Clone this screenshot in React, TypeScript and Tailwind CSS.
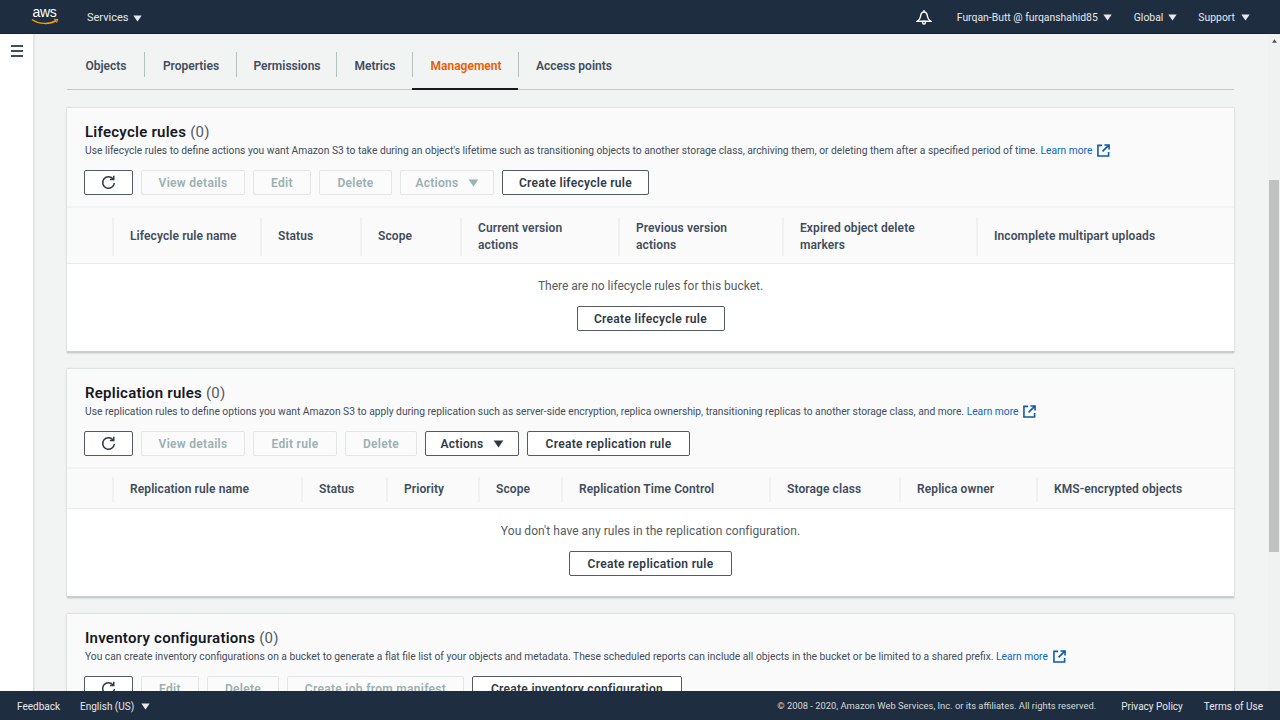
import React from "react";

const Caret = ({ className = "" }: { className?: string }) => (
  <svg viewBox="0 0 12 9" className={className} fill="currentColor">
    <path d="M0.5 0.5h11L6 8.5z" />
  </svg>
);

const Refresh = () => (
  <svg viewBox="0 0 16 16" className="w-[15px] h-[15px]" fill="none" stroke="currentColor" strokeWidth="1.6">
    <path d="M13.2 4.6A6.2 6.2 0 1 0 14.2 8.5" />
    <path d="M13.6 0.8V4.9H9.5" />
  </svg>
);

const External = () => (
  <svg viewBox="0 0 14 14" className="w-[13px] h-[13px] ml-[5px] inline-block align-[-3px] text-[#0a5cad]" fill="none" stroke="currentColor" strokeWidth="1.7">
    <path d="M5.5 1.5H1v11.5h11.5V8.5" />
    <path d="M8 1h5v5M13 1 6 8" />
  </svg>
);

const Btn = ({ w, children, disabled, caret }: { w: string; children?: React.ReactNode; disabled?: boolean; caret?: boolean }) => (
  <div
    className={`${w} h-[25px] shrink-0 flex items-center justify-center gap-[9px] rounded-[2px] border text-[12px] tracking-[0.3px] font-semibold ${
      disabled ? "border-[#e3e6e6] text-[#9ab0b1] bg-[#fbfbfb]" : "border-[#545b64] text-[#2f3a45] bg-white"
    }`}
  >
    {children}
    {caret && <Caret className="w-[11px] h-[8px]" />}
  </div>
);

const HeadCell = ({ w, children }: { w: string; children: React.ReactNode }) => (
  <div className={`${w} shrink-0 flex items-center`}>
    <div className="w-[2px] self-stretch my-[1px] bg-[#f0f1f1]" />
    <div className="pl-4 text-[12px] leading-[17px] tracking-[0.1px] font-semibold text-[#414d5c]">{children}</div>
  </div>
);

const Card = ({ children, className = "" }: { children: React.ReactNode; className?: string }) => (
  <section className={`bg-white border-b-[2px] border-[#c9cdcd] shadow-[0_0_2px_rgba(0,28,36,0.25)] ${className}`}>{children}</section>
);

const CardHead = ({ title, desc, buttons }: { title: string; desc: string; buttons: React.ReactNode }) => (
  <div className="bg-[#fafafa] pl-[18px] pr-4 border-b-[2px] border-[#f2f3f3]">
    <h2 className="pt-[14px] text-[15px] leading-[20px] tracking-[0.25px] font-semibold text-[#16191f]">
      {title} <span className="font-normal text-[#545b64]">(0)</span>
    </h2>
    <p className="mt-[1px] text-[10.25px] leading-[15px] text-[#414d5c] whitespace-nowrap">
      {desc} <span className="text-[#0a66c2]">Learn more</span>
      <External />
    </p>
    <div className="flex gap-2 pt-[12px] pb-[11px] -ml-px">{buttons}</div>
  </div>
);

const tabs = [
  { t: "Objects", w: "w-[78px]" },
  { t: "Properties", w: "w-[92px]" },
  { t: "Permissions", w: "w-[100px]" },
  { t: "Metrics", w: "w-[76px]" },
  { t: "Management", w: "w-[106px]", active: true },
  { t: "Access points", w: "w-[110px]" },
];

export default function App() {
  return (
    <div className="h-screen flex flex-col overflow-hidden font-['Roboto','Noto_Sans',sans-serif] bg-white">
      <header className="h-[34px] shrink-0 bg-[#1f2d40] border-b border-[#18222f] flex items-center pt-[3px] text-[#e6e9ec] text-[11px]">
        <div className="ml-[30px] -mt-[5px] w-[29px] flex flex-col items-center leading-none">
          <span className="text-[14px] leading-[11px] tracking-[-0.3px] text-white font-['Liberation_Sans',sans-serif]">aws</span>
          <svg viewBox="0 0 28 7" className="w-[28px] h-[7px]" fill="none">
            <path d="M1 1.5C8 6.5 19 6.5 25.5 2.5" stroke="#f90" strokeWidth="1.5" />
            <path d="M23 1.2l3.6.2-1 3.2" stroke="#f90" strokeWidth="1.1" />
          </svg>
        </div>
        <span className="ml-[28px]">Services</span>
        <Caret className="ml-[5px] w-[9px] h-[7px]" />
        <div className="ml-auto flex items-center text-[10.4px]">
          <svg viewBox="0 0 16 16" className="w-[16px] h-[16px] -mt-[2px] mr-[25px]" fill="none" stroke="white" strokeWidth="1.4">
            <path d="M8 1V3M8 3C5.6 3 4.8 5 4.6 7.2 4.4 9.4 3.4 10.6 1.2 12.2h13.6c-2.2-1.6-3.2-2.8-3.4-5C11.2 5 10.4 3 8 3Z" />
            <circle cx="8" cy="13.6" r="1.5" />
          </svg>
          <span>Furqan-Butt @ furqanshahid85</span>
          <Caret className="ml-[5px] w-[9px] h-[7px]" />
          <span className="ml-[22px]">Global</span>
          <Caret className="ml-[5px] w-[9px] h-[7px]" />
          <span className="ml-[21px]">Support</span>
          <Caret className="ml-[6px] mr-[30px] w-[9px] h-[7px]" />
        </div>
      </header>

      <div className="flex-1 flex min-h-0">
        <aside className="w-[35px] shrink-0 bg-white border-r-[2px] border-[#e3e5e5] pt-[11px] pl-[11px]">
          <div className="w-[12px] flex flex-col gap-[3px]">
            <div className="h-[2px] bg-[#414d5c]" />
            <div className="h-[2px] bg-[#414d5c]" />
            <div className="h-[2px] bg-[#414d5c]" />
          </div>
        </aside>

        <main className="flex-1 min-w-0 bg-[#f2f3f3] overflow-hidden pl-8 pr-[34px]">
          <nav className="mt-[16px] h-[39px] flex border-b-[1px] border-[#c3c8c8] box-content">
            {tabs.map((tab, i) => (
              <div key={tab.t} className={`${tab.w} shrink-0 relative flex items-center justify-center pb-[7px] text-[12px] font-semibold ${tab.active ? "text-[#ec5b00]" : "text-[#414d5c]"}`}>
                {tab.t}
                {i < 5 && <span className="absolute right-0 top-[2px] h-[25px] w-px bg-[#b6bfbf]" />}
                {tab.active && <span className="absolute -left-px right-px -bottom-[1px] h-[2px] bg-[#16191f]" />}
              </div>
            ))}
          </nav>

          <div className="mt-[18px] flex flex-col gap-4">
            <Card>
              <CardHead
                title="Lifecycle rules"
                desc="Use lifecycle rules to define actions you want Amazon S3 to take during an object's lifetime such as transitioning objects to another storage class, archiving them, or deleting them after a specified period of time."
                buttons={
                  <>
                    <Btn w="w-[49px]"><Refresh /></Btn>
                    <Btn w="w-[104px]" disabled>View details</Btn>
                    <Btn w="w-[58px]" disabled>Edit</Btn>
                    <Btn w="w-[73px]" disabled>Delete</Btn>
                    <Btn w="w-[94px]" disabled caret>Actions</Btn>
                    <Btn w="w-[147px]">Create lifecycle rule</Btn>
                  </>
                }
              />
              <div className="h-[56px] bg-[#fafafa] pl-[45px] pt-[8px] pb-[6px] flex border-b border-[#eaeded]">
                <HeadCell w="w-[148px]">Lifecycle rule name</HeadCell>
                <HeadCell w="w-[100px]">Status</HeadCell>
                <HeadCell w="w-[100px]">Scope</HeadCell>
                <HeadCell w="w-[158px]">Current version<br />actions</HeadCell>
                <HeadCell w="w-[164px]">Previous version<br />actions</HeadCell>
                <HeadCell w="w-[194px]">Expired object delete<br />markers</HeadCell>
                <HeadCell w="w-[240px]">Incomplete multipart uploads</HeadCell>
              </div>
              <div className="h-[87px] flex flex-col items-center pt-[14px]">
                <p className="text-[12px] leading-[17px] text-[#545b64]">There are no lifecycle rules for this bucket.</p>
                <div className="mt-[11px]"><Btn w="w-[148px]">Create lifecycle rule</Btn></div>
              </div>
            </Card>

            <Card>
              <CardHead
                title="Replication rules"
                desc="Use replication rules to define options you want Amazon S3 to apply during replication such as server-side encryption, replica ownership, transitioning replicas to another storage class, and more."
                buttons={
                  <>
                    <Btn w="w-[49px]"><Refresh /></Btn>
                    <Btn w="w-[104px]" disabled>View details</Btn>
                    <Btn w="w-[84px]" disabled>Edit rule</Btn>
                    <Btn w="w-[72px]" disabled>Delete</Btn>
                    <Btn w="w-[94px]" caret>Actions</Btn>
                    <Btn w="w-[163px]">Create replication rule</Btn>
                  </>
                }
              />
              <div className="h-[40px] bg-[#fafafa] pl-[45px] pt-[7px] pb-[5px] flex border-b border-[#eaeded]">
                <HeadCell w="w-[189px]">Replication rule name</HeadCell>
                <HeadCell w="w-[85px]">Status</HeadCell>
                <HeadCell w="w-[92px]">Priority</HeadCell>
                <HeadCell w="w-[83px]">Scope</HeadCell>
                <HeadCell w="w-[208px]">Replication Time Control</HeadCell>
                <HeadCell w="w-[130px]">Storage class</HeadCell>
                <HeadCell w="w-[137px]">Replica owner</HeadCell>
                <HeadCell w="w-[170px]">KMS-encrypted objects</HeadCell>
              </div>
              <div className="h-[87px] flex flex-col items-center pt-[14px]">
                <p className="text-[12px] leading-[17px] tracking-[0.05px] text-[#545b64]">You don't have any rules in the replication configuration.</p>
                <div className="mt-[11px]"><Btn w="w-[163px]">Create replication rule</Btn></div>
              </div>
            </Card>

            <Card>
              <CardHead
                title="Inventory configurations"
                desc="You can create inventory configurations on a bucket to generate a flat file list of your objects and metadata. These scheduled reports can include all objects in the bucket or be limited to a shared prefix."
                buttons={
                  <>
                    <Btn w="w-[49px]"><Refresh /></Btn>
                    <Btn w="w-[58px]" disabled>Edit</Btn>
                    <Btn w="w-[72px]" disabled>Delete</Btn>
                    <Btn w="w-[177px]" disabled>Create job from manifest</Btn>
                    <Btn w="w-[210px]">Create inventory configuration</Btn>
                  </>
                }
              />
            </Card>
          </div>
        </main>

        <div className="w-3 shrink-0 bg-[#f1f1f1] flex flex-col items-center relative">
          <Caret className="mt-[5px] w-[7px] h-[4px] rotate-180 text-[#505050]" />
          <div className="mt-[137px] w-[10px] h-[372px] bg-[#c1c1c1]" />
        </div>
      </div>

      <footer className="h-[29px] shrink-0 bg-[#1f2d40] flex items-center pt-[1px] text-[#e6e9ec] text-[10px]">
        <span className="ml-[17px]">Feedback</span>
        <span className="ml-[20px]">English (US)</span>
        <Caret className="ml-[7px] w-[9px] h-[7px]" />
        <span className="ml-auto text-[9.4px] text-[#d5dbdb]">© 2008 - 2020, Amazon Web Services, Inc. or its affiliates. All rights reserved.</span>
        <span className="ml-[25px]">Privacy Policy</span>
        <span className="ml-[21px] mr-[17px]">Terms of Use</span>
      </footer>
    </div>
  );
}
